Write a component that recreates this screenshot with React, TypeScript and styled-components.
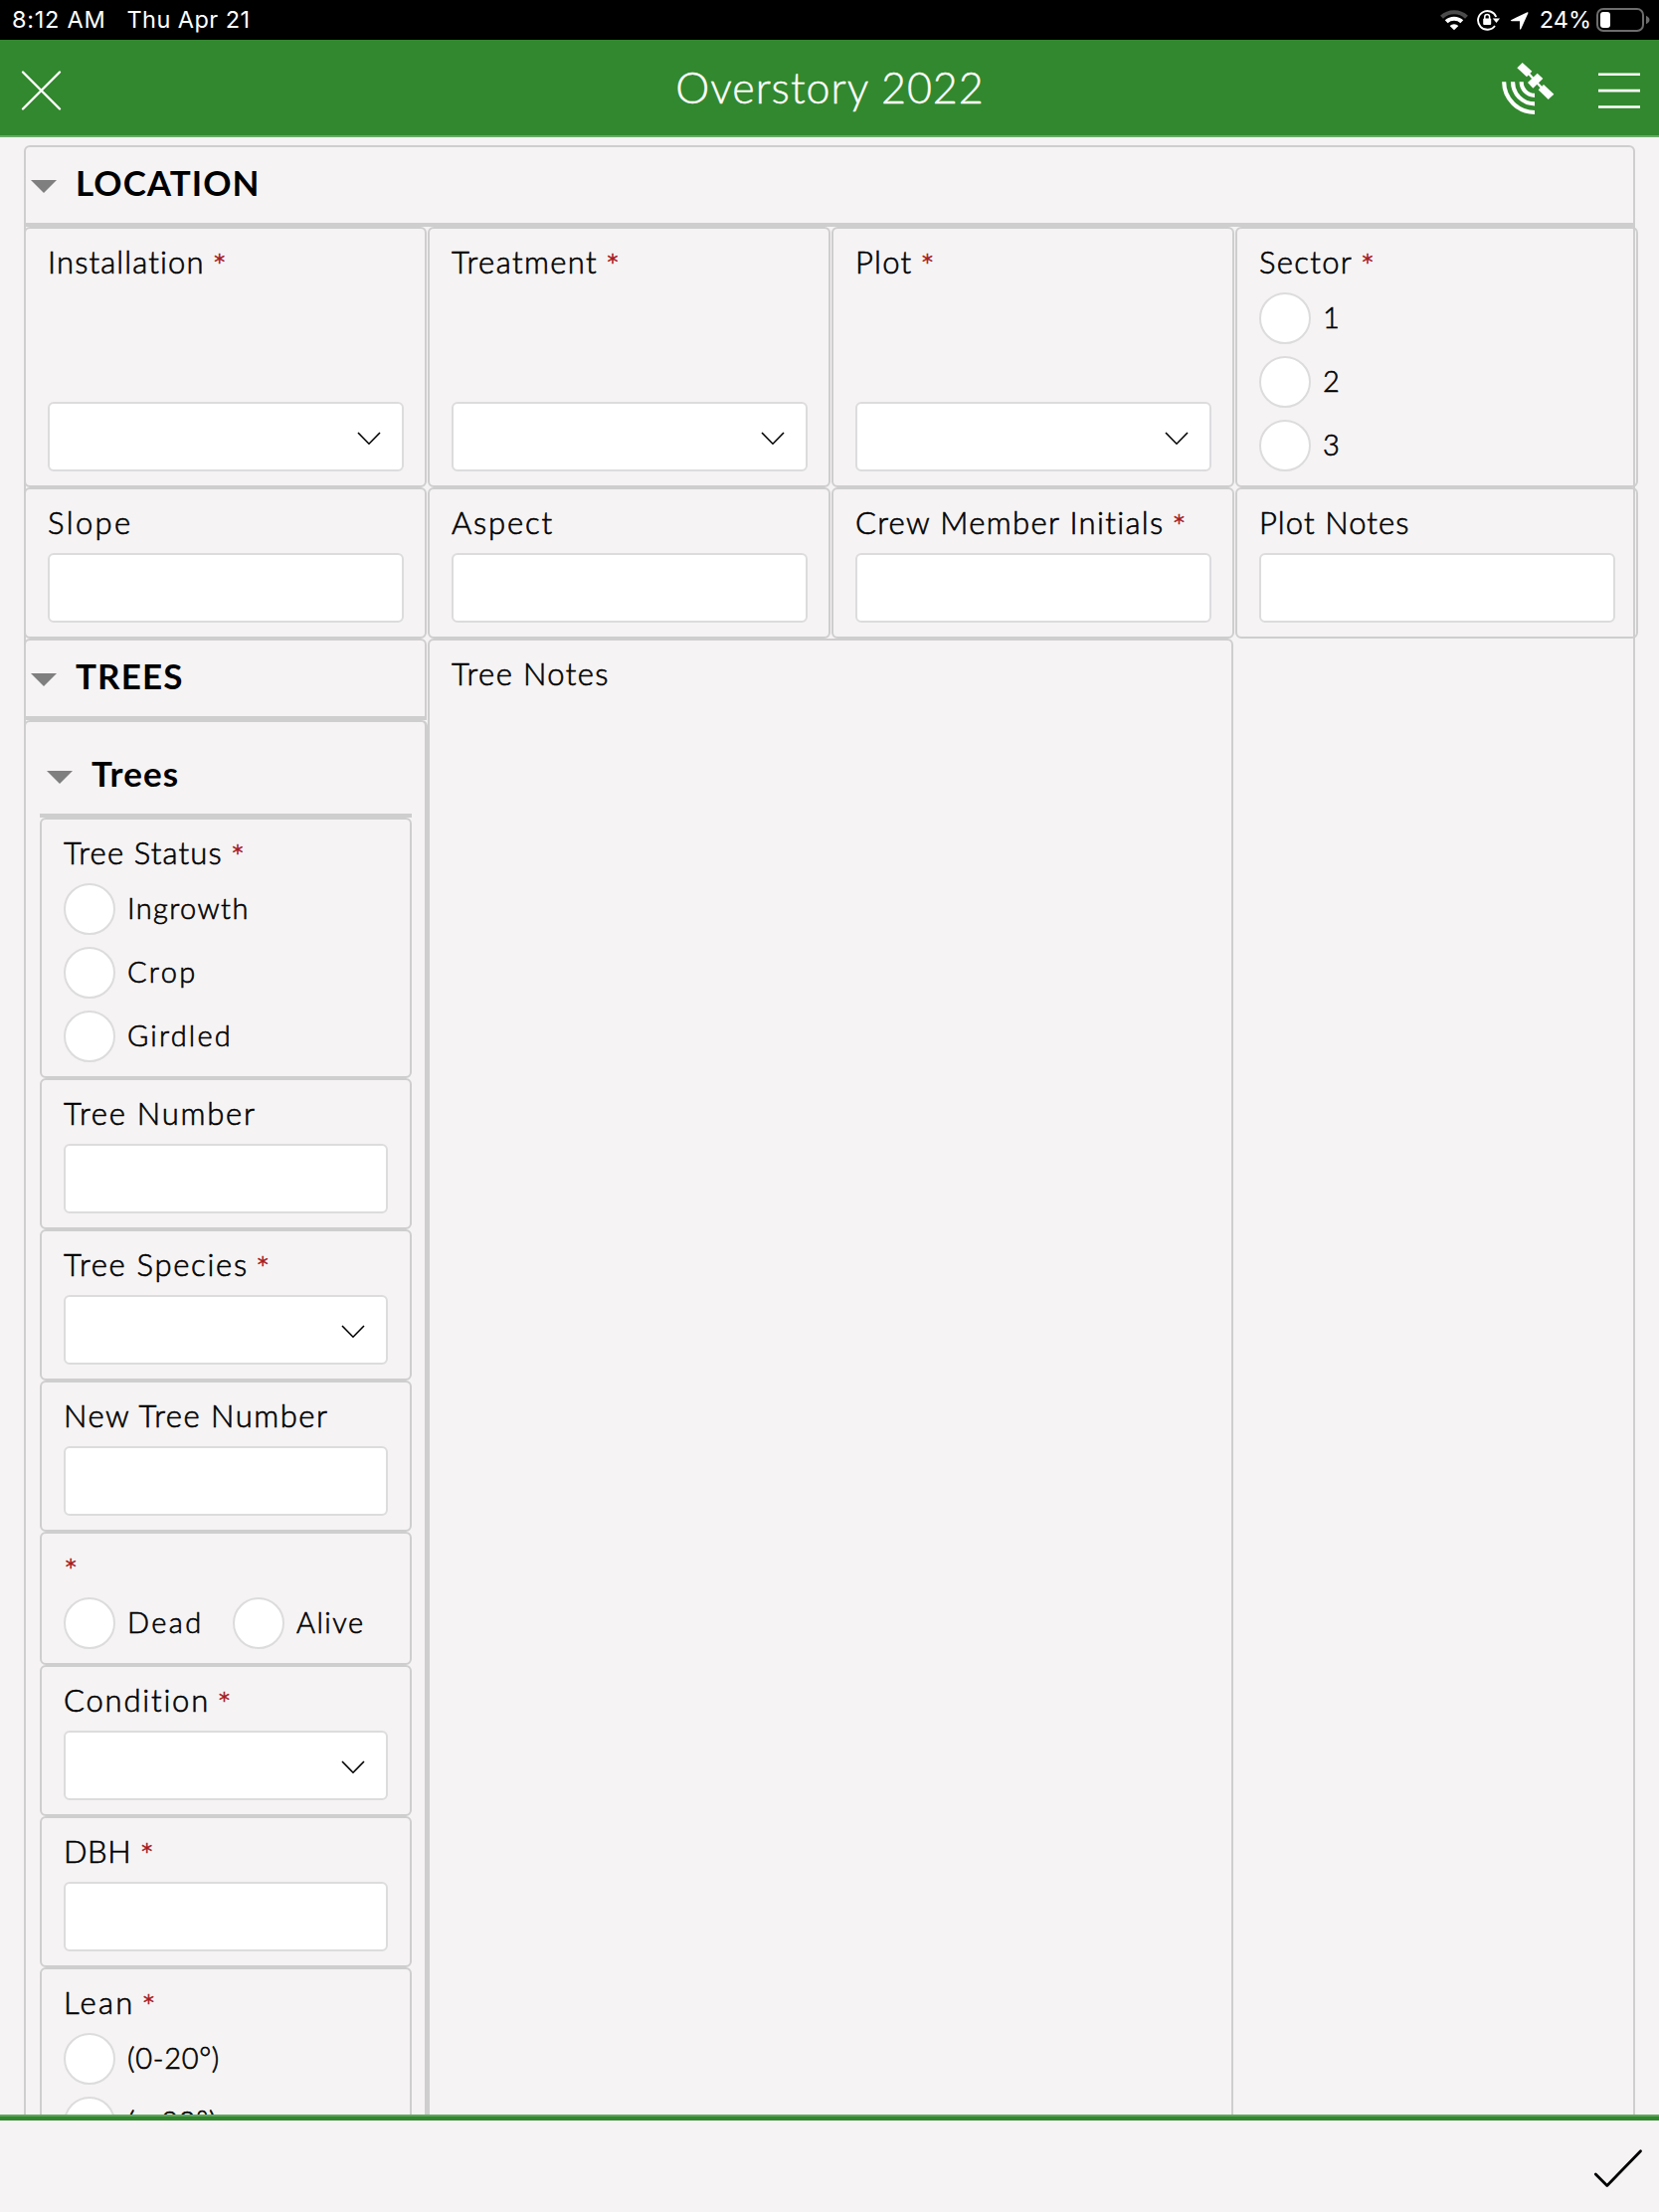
import React from 'react';
import styled, { createGlobalStyle } from 'styled-components';

const line = '#cfcecf';
const fieldLine = '#dddcdd';
const surface = '#f5f3f4';
const green = '#32882e';

const GlobalStyle = createGlobalStyle`
  * { box-sizing: border-box; }
  body { margin: 0; background: ${surface}; color: #000; font-family: Lato, "Open Sans", sans-serif; overflow: hidden; }
`;

const Screen = styled.div`
  display: flex;
  flex-direction: column;
  width: 1668px;
  height: 2224px;
  overflow: hidden;
`;

const StatusBar = styled.div`
  display: flex;
  flex: none;
  justify-content: space-between;
  height: 40px;
  padding: 0 9px 0 12px;
  background: #000;
  color: #fff;
  font: 400 23.5px/39px Inter, "Liberation Sans", sans-serif;
`;

const StatusGroup = styled.div<{ $gap: number }>`
  display: flex;
  gap: ${(p) => p.$gap}px;
  height: 40px;
`;

const StatusText = styled.span<{ $track?: number }>`
  letter-spacing: ${(p) => p.$track ?? 0}px;
  white-space: nowrap;
`;

const BatteryLevel = styled(StatusText)`
  margin: 0 -4px 0 2px;
`;

const Header = styled.header`
  display: grid;
  flex: none;
  grid-template-columns: 200px 1fr 200px;
  align-items: center;
  height: 98px;
  padding: 0 16px;
  background: ${green};
  border-bottom: 2px solid #69a968;
  color: #fff;
`;

const Title = styled.h1`
  margin: 0;
  font-size: 43px;
  font-weight: 300;
  line-height: 52px;
  letter-spacing: 1px;
  text-indent: 1px;
  text-align: center;
  -webkit-text-stroke: 0.4px currentColor;
`;

const HeaderActions = styled.div`
  display: flex;
  justify-content: flex-end;
  align-items: center;
  gap: 43px;
  padding-right: 3px;
`;

const IconButton = styled.button`
  display: flex;
  padding: 0;
  border: 0;
  background: none;
  color: inherit;
`;

const Content = styled.main`
  flex: 1;
  min-height: 0;
  padding: 8px 24px 0;
  overflow: hidden;
`;

const FormPanel = styled.div`
  height: 2200px;
  border-radius: 6px;
  box-shadow: inset 0 0 0 2px ${line};
`;

const SectionHeader = styled.div<{ $framed?: boolean }>`
  display: flex;
  height: 82px;
  border: solid ${line};
  border-width: ${(p) => (p.$framed ? '2px 2px 4px' : '0 0 4px')};
  border-radius: ${(p) => (p.$framed ? '6px 6px 0 0' : '0')};
  padding: ${(p) => (p.$framed ? '15px 0 0 5px' : '17px 0 0 7px')};
`;

const Triangle = styled.span`
  width: 26px;
  height: 13px;
  margin-top: 18px;
  background: #7f7f7f;
  clip-path: polygon(0 0, 100% 0, 50% 100%);
`;

const SectionTitle = styled.h2<{ $track: number }>`
  margin: -1px 0 0 19px;
  font-size: 35px;
  font-weight: 700;
  line-height: 42px;
  letter-spacing: ${(p) => p.$track}px;
`;

const Row = styled.div<{ $height: number }>`
  display: grid;
  grid-template-columns: repeat(4, 405px);
  column-gap: 1px;
  height: ${(p) => p.$height}px;
`;

const Cell = styled.div<{ $height?: number; $nested?: boolean }>`
  display: flex;
  flex-direction: column;
  justify-content: space-between;
  height: ${(p) => (p.$height ? `${p.$height}px` : '100%')};
  padding: 14px ${(p) => (p.$nested ? 22 : 21)}px 14px 22px;
  border: 2px solid ${line};
  border-radius: 6px;
`;

const Label = styled.div`
  display: flex;
  height: 38px;
  font-size: 31px;
  font-weight: 300;
  line-height: 38px;
  white-space: nowrap;
  -webkit-text-stroke: 0.6px currentColor;
`;

const LabelText = styled.span<{ $track: number }>`
  letter-spacing: ${(p) => p.$track}px;
  margin-right: ${(p) => 9 - p.$track}px;
`;

const Star = styled.span`
  color: #a8191d;
  font-size: 34px;
  line-height: 45px;
`;

const Input = styled.div`
  display: flex;
  justify-content: flex-end;
  align-items: center;
  height: 70px;
  padding: 3px 21px 0 0;
  border: 2px solid ${fieldLine};
  border-radius: 6px;
  background: #fff;
`;

const Options = styled.div<{ $inline?: boolean }>`
  display: grid;
  grid-template-columns: ${(p) => (p.$inline ? '170px 1fr' : '1fr')};
  row-gap: 12px;
`;

const Option = styled.label`
  display: flex;
  align-items: center;
  gap: 12px;
  height: 52px;
`;

const Radio = styled.span`
  flex: none;
  width: 52px;
  height: 52px;
  border: 2px solid ${fieldLine};
  border-radius: 50%;
  background: #fff;
`;

const OptionText = styled.span<{ $track: number }>`
  padding-bottom: 2px;
  font-size: 29px;
  font-weight: 300;
  line-height: 36px;
  letter-spacing: ${(p) => p.$track}px;
  white-space: nowrap;
  -webkit-text-stroke: 0.6px currentColor;
`;

const TreesRow = styled.div`
  display: grid;
  grid-template-columns: 406px 810px;
`;

const TreesColumn = styled.div`
  padding-right: 1px;
`;

const TreesGroup = styled.div`
  width: 406px;
  height: 1600px;
  padding: 14px 13px 0 14px;
  border: 2px solid ${line};
  border-right-width: 3px;
  border-radius: 6px;
`;

const NotesPanel = styled.div`
  padding: 14px 22px;
  border: 2px solid ${line};
  border-radius: 6px;
`;

const Footer = styled.footer`
  display: flex;
  flex: none;
  justify-content: flex-end;
  height: 96px;
  padding: 26px 16px 0 0;
  border-top: 4px solid ${green};
  box-shadow: 0 -2px 0 #62a560;
  margin-top: 2px;
  background: ${surface};
`;

const Chevron = () => (
  <svg width="24" height="14" viewBox="0 0 24 14" fill="none" stroke="#000" strokeWidth="1.6">
    <path d="M1 1 L12 12.2 L23 1" />
  </svg>
);

const CloseIcon = () => (
  <svg width="50" height="50" viewBox="0 0 50 50" fill="none" stroke="#fff" strokeWidth="2.4" strokeLinecap="round">
    <path d="M7 9.5 L44 46.5 M44 9.5 L7 46.5" />
  </svg>
);

const SatelliteIcon = () => (
  <svg width="56" height="56" viewBox="264 183 168 168" fill="#fff">
    <path d="M316 208 L332 192 L361 218 L345 235 Z" />
    <path d="M348 252 L377 224 L394 240 L364 269 Z" />
    <path d="M380 274 L396 258 L427 287 L410 303 Z" />
    <path d="M350 224 L390 268" stroke="#fff" strokeWidth="7" fill="none" />
    <g fill="none" stroke="#fff" strokeWidth="12.5">
      <path d="M329 250 A40 40 0 0 0 369 290.500" />
      <path d="M303 250 A66 66 0 0 0 369 316" />
      <path d="M276.500 250 A92.500 92.500 0 0 0 369 342" />
    </g>
  </svg>
);

const MenuIcon = () => (
  <svg width="42" height="42" viewBox="0 0 42 42" stroke="#fff" strokeWidth="2.6">
    <path d="M0 7.800 H42 M0 24.100 H42 M0 40.500 H42" />
  </svg>
);

const WifiIcon = () => (
  <svg width="28" height="40" viewBox="0 0 28 40" fill="none" strokeWidth="4.200">
    <path d="M1.500 17.200 A18.300 18.300 0 0 1 26.500 17.200" stroke="#4a4a4a" />
    <path d="M6.200 21.800 A11.500 11.500 0 0 1 21.800 21.800" stroke="#fff" />
    <path d="M9.600 26 A6.600 6.600 0 0 1 18.400 26 L14 30.200 Z" fill="#fff" />
  </svg>
);

const LockIcon = () => (
  <svg width="24" height="40" viewBox="0 0 24 40" fill="none" stroke="#fff" strokeWidth="1.900">
    <path d="M19.200 17 A9.400 9.400 0 1 0 18 26" />
    <path d="M15.800 18.500 H23 L19.500 23 Z" fill="#fff" stroke="none" />
    <rect x="6.200" y="18.500" width="8" height="6.500" rx="1" fill="#fff" stroke="none" />
    <path d="M7.800 19 V16.800 A2.400 2.400 0 0 1 12.600 16.800 V19" strokeWidth="1.500" />
  </svg>
);

const ArrowIcon = () => (
  <svg width="19" height="40" viewBox="0 0 19 40" fill="#fff">
    <path d="M17.600 12.200 Q18.800 12 18.400 13.200 L11.300 29 Q10.400 30.500 10 28.800 V21.300 H2 Q-0.200 20.900 1.600 19.900 Z" />
  </svg>
);

const BatteryIcon = () => (
  <svg width="54" height="40" viewBox="0 0 54 40">
    <rect x="1" y="9" width="46" height="22" rx="6" fill="none" stroke="#6d6d6d" strokeWidth="2" />
    <rect x="4" y="12" width="10" height="16" rx="3" fill="#fff" />
    <path d="M50 15.700 Q53.500 17.500 53.500 20 Q53.500 22.500 50 24.300 Z" fill="#6d6d6d" />
  </svg>
);

const CheckIcon = () => (
  <svg width="50" height="44" viewBox="0 0 50 44" fill="none" stroke="#000" strokeWidth="2.800" strokeLinecap="round" strokeLinejoin="round">
    <path d="M2.300 28 L13.800 39.500 L47.500 4.700" />
  </svg>
);

type FieldProps = {
  label: string;
  track?: number;
  required?: boolean;
  kind?: 'text' | 'select' | 'radio';
  options?: [string, number][];
  inline?: boolean;
  height?: number;
  nested?: boolean;
};

const Field = ({ label, track = 1, required, kind = 'text', options = [], inline, height, nested }: FieldProps) => (
  <Cell $height={height} $nested={nested}>
    <Label>
      {label && <LabelText $track={track}>{label}</LabelText>}
      {required && <Star>*</Star>}
    </Label>
    {kind === 'radio' ? (
      <Options $inline={inline}>
        {options.map(([text, spacing]) => (
          <Option key={text}>
            <Radio />
            <OptionText $track={spacing}>{text}</OptionText>
          </Option>
        ))}
      </Options>
    ) : (
      <Input>{kind === 'select' && <Chevron />}</Input>
    )}
  </Cell>
);

const Heading = ({ text, track, framed }: { text: string; track: number; framed?: boolean }) => (
  <SectionHeader $framed={framed}>
    <Triangle />
    <SectionTitle $track={track}>{text}</SectionTitle>
  </SectionHeader>
);

export default function App() {
  return (
    <Screen>
      <GlobalStyle />
      <StatusBar>
        <StatusGroup $gap={21}>
          <StatusText $track={0.75}>8:12 AM</StatusText>
          <StatusText $track={0.45}>Thu Apr 21</StatusText>
        </StatusGroup>
        <StatusGroup $gap={9}>
          <WifiIcon />
          <LockIcon />
          <ArrowIcon />
          <BatteryLevel>24%</BatteryLevel>
          <BatteryIcon />
        </StatusGroup>
      </StatusBar>
      <Header>
        <IconButton aria-label="Close"><CloseIcon /></IconButton>
        <Title>Overstory 2022</Title>
        <HeaderActions>
          <IconButton aria-label="GPS"><SatelliteIcon /></IconButton>
          <IconButton aria-label="Menu"><MenuIcon /></IconButton>
        </HeaderActions>
      </Header>
      <Content>
        <FormPanel>
          <Heading text="LOCATION" track={1.05} />
          <Row $height={262}>
            <Field label="Installation" track={1.13} required kind="select" />
            <Field label="Treatment" track={1.4} required kind="select" />
            <Field label="Plot" track={1.3} required kind="select" />
            <Field label="Sector" track={1.35} required kind="radio" options={[['1', 0], ['2', 0], ['3', 0]]} />
          </Row>
          <Row $height={152}>
            <Field label="Slope" track={2.4} />
            <Field label="Aspect" track={1.8} />
            <Field label="Crew Member Initials" track={1.35} required />
            <Field label="Plot Notes" track={1.1} />
          </Row>
          <TreesRow>
            <TreesColumn>
              <Heading text="TREES" track={1.1} framed />
              <TreesGroup>
                <Heading text="Trees" track={1.1} />
                <Field nested height={262} label="Tree Status" track={1.15} required kind="radio" options={[['Ingrowth', 1.4], ['Crop', 2.4], ['Girdled', 2.2]]} />
                <Field nested height={152} label="Tree Number" track={1.75} />
                <Field nested height={152} label="Tree Species" track={1.7} required kind="select" />
                <Field nested height={152} label="New Tree Number" track={1.5} />
                <Field nested height={134} label="" required kind="radio" inline options={[['Dead', 2.4], ['Alive', 1.5]]} />
                <Field nested height={152} label="Condition" track={1.8} required kind="select" />
                <Field nested height={152} label="DBH" track={0.5} required />
                <Field nested height={198} label="Lean" track={2.3} required kind="radio" options={[['(0-20°)', 0.7], ['(> 20°)', 0.7]]} />
              </TreesGroup>
            </TreesColumn>
            <NotesPanel>
              <Label><LabelText $track={1.4}>Tree Notes</LabelText></Label>
            </NotesPanel>
          </TreesRow>
        </FormPanel>
      </Content>
      <Footer><CheckIcon /></Footer>
    </Screen>
  );
}
